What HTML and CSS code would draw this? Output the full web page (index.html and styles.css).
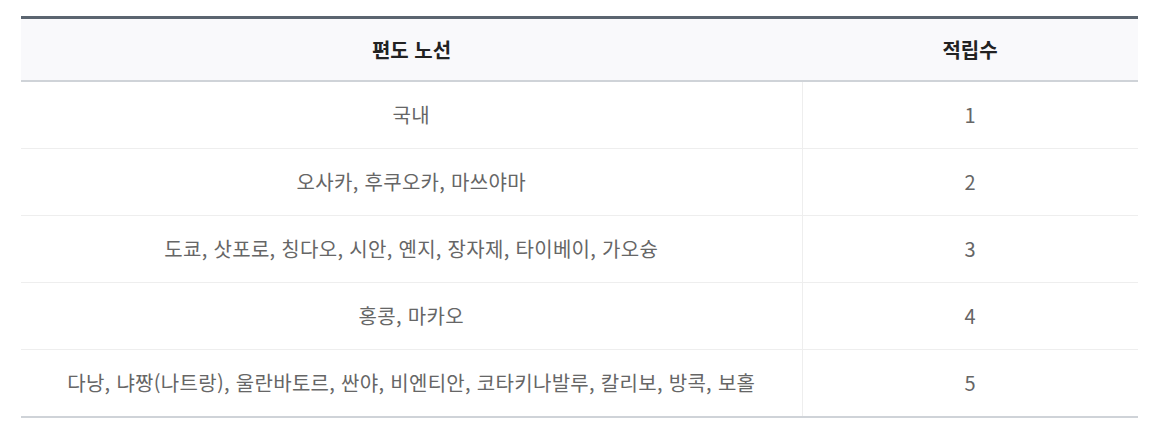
FILE: index.html
```html
<!DOCTYPE html>
<html lang="ko">
<head>
<meta charset="utf-8">
<link rel="stylesheet" href="styles.css">
</head>
<body>
<div class="wrap">
<table class="tbl">
<thead>
<tr><th class="c1">편도 노선</th><th class="c2">적립수</th></tr>
</thead>
<tbody>
<tr><td class="c1">국내</td><td class="c2">1</td></tr>
<tr><td class="c1">오사카, 후쿠오카, 마쓰야마</td><td class="c2">2</td></tr>
<tr><td class="c1">도쿄, 삿포로, 칭다오, 시안, 옌지, 장자제, 타이베이, 가오슝</td><td class="c2">3</td></tr>
<tr><td class="c1">홍콩, 마카오</td><td class="c2">4</td></tr>
<tr><td class="c1">다낭, 냐짱(나트랑), 울란바토르, 싼야, 비엔티안, 코타키나발루, 칼리보, 방콕, 보홀</td><td class="c2">5</td></tr>
</tbody>
</table>
</div>
</body>
</html>
```
FILE: styles.css
```css
html, body { margin: 0; padding: 0; background: #fff; }
body { font-family: "Noto Sans CJK KR", "Noto Sans", sans-serif; }
.wrap { padding: 16px 0 0 21px; }
.tbl {
  width: 1117px;
  border-collapse: collapse;
  border-top: 3px solid #5b6570;
  border-bottom: 2px solid #cfd3d8;
  table-layout: fixed;
}
.tbl th {
  background: #f9f9fb;
  height: 61px;
  padding: 0;
  font-size: 20px;
  line-height: 24px;
  font-weight: 700;
  color: #222;
  border-bottom: 2px solid #cfd3d8;
  text-align: center;
  vertical-align: middle;
}
.tbl th.c1 { width: 781px; }
.tbl td {
  height: 66px;
  padding: 0;
  font-size: 20px;
  line-height: 24px;
  letter-spacing: 0.3px;
  color: #666;
  text-align: center;
  vertical-align: middle;
  border-top: 1px solid #eeeeee;
}
.tbl tbody tr:first-child td { border-top: 0; }
.tbl td.c1 { border-right: 1px solid #eeeeee; }
```
